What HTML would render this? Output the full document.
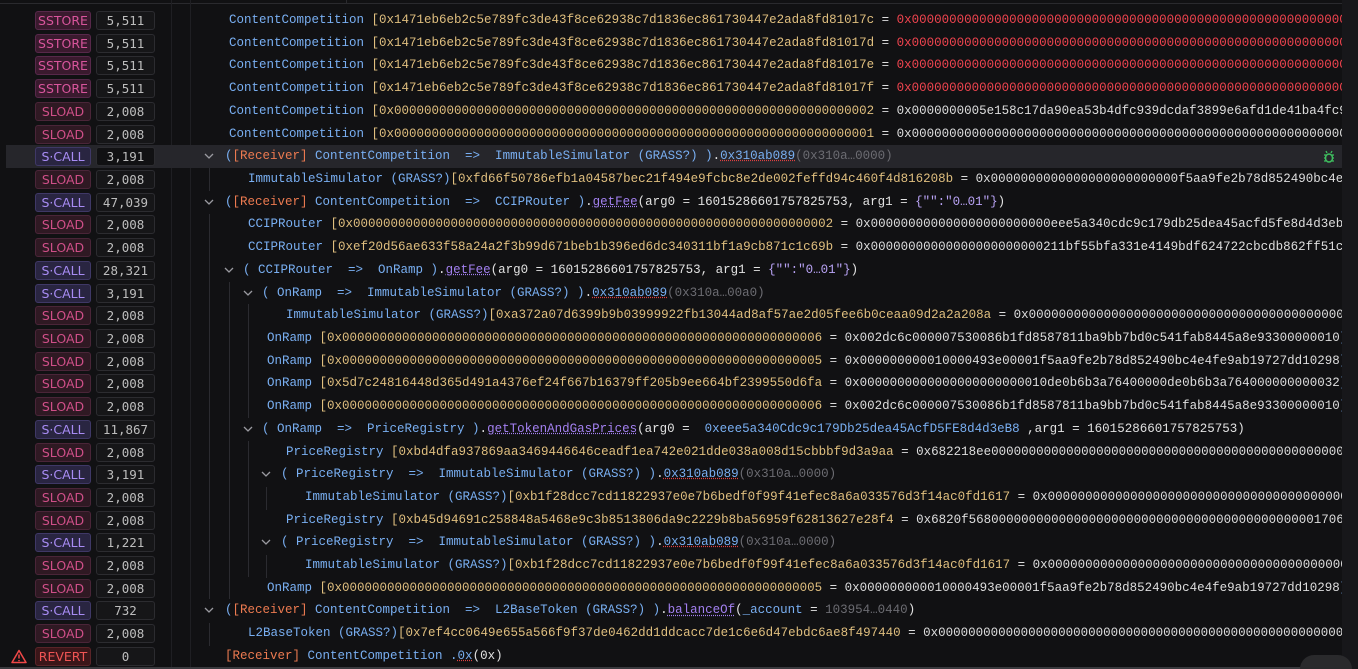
<!DOCTYPE html>
<html style="width:1358px;height:669px;overflow:hidden"><head><meta charset="utf-8"><style>
*{margin:0;padding:0;box-sizing:border-box}
body{width:1358px;height:669px;background:#111113;overflow:hidden;position:relative;font-family:"Liberation Mono",monospace;font-size:12.5px;color:#dedede}
.r{position:absolute;left:0;height:23px;width:1342px}
.hl{background:#26262b;left:6px;width:1336px}
.b{position:absolute;left:35px;top:2px;width:56px;height:19px;border-radius:3px;font-family:"DejaVu Sans","Liberation Sans",sans-serif;font-size:12.5px;line-height:18px;text-align:center}
.ss{background:#3a1a2e;border:1px solid #57284a;color:#d8559c}
.sl{background:#2f1923;border:1px solid #4a2538;color:#cf4f88}
.sc{background:#292541;border:1px solid #3f3866;color:#a88cf4}
.rv{background:#3b1619;border:1px solid #5a2428;color:#f05454}
.g{position:absolute;left:96px;top:2px;width:59px;height:19px;border-radius:3px;background:#161618;border:1px solid #2c2c30;color:#bdbdbd;text-align:center;line-height:18px;font-family:"DejaVu Sans Mono","Liberation Mono",monospace;font-size:12.5px}
.hl .g{background:#111113}
.t{position:absolute;top:0;line-height:23px;white-space:pre;overflow:hidden}
.n{color:#79aff2}.h{color:#e0bf7f}.w{color:#e2e2e2}.red{color:#f0444f}.o{color:#ec7a50}
.f{color:#a380f0;text-decoration:underline dotted #a380f0}
.fx{color:#79aff2;text-decoration:underline dotted #e04040}
.gy{color:#6c6c72}.p{color:#b9a3f5}
.ch{position:absolute;top:7px;width:10px;height:8px}
.v{position:absolute;width:1px;background:#2b2b30}
</style></head><body>
<div style="position:absolute;left:0;top:3px;width:1342px;height:1px;background:#2a2a2e"></div>
<div style="position:absolute;left:346px;top:0;width:1px;height:4px;background:#2a2a2e"></div>
<div style="position:absolute;left:171px;top:0;width:1px;height:669px;background:#1f1f23"></div>
<div style="position:absolute;left:190px;top:0;width:1px;height:669px;background:#1f1f23"></div>
<div style="position:absolute;left:1342px;top:0;width:16px;height:669px;background:#17171a"></div>
<div style="position:absolute;left:0;top:667px;width:1342px;height:2px;background:#3a3a3e"></div>

<div class="v" style="left:209px;top:168px;height:23px"></div>
<div class="v" style="left:209px;top:214px;height:385px"></div>
<div class="v" style="left:229px;top:282px;height:317px"></div>
<div class="v" style="left:248px;top:304px;height:114px"></div>
<div class="v" style="left:248px;top:441px;height:136px"></div>
<div class="v" style="left:266px;top:487px;height:23px"></div>
<div class="v" style="left:266px;top:555px;height:23px"></div>
<div class="v" style="left:209px;top:623px;height:23px"></div>

<div class="r" style="top:9px"><div class="b ss">SSTORE</div><div class="g">5,511</div><div class="t" style="left:229px;width:1113px"><span class="n">ContentCompetition </span><span class="h">[0x1471eb6eb2c5e789fc3de43f8ce62938c7d1836ec861730447e2ada8fd81017c</span> = <span class="red">0x0000000000000000000000000000000000000000000000000000000000000000</span></div></div>
<div class="r" style="top:31.7px"><div class="b ss">SSTORE</div><div class="g">5,511</div><div class="t" style="left:229px;width:1113px"><span class="n">ContentCompetition </span><span class="h">[0x1471eb6eb2c5e789fc3de43f8ce62938c7d1836ec861730447e2ada8fd81017d</span> = <span class="red">0x0000000000000000000000000000000000000000000000000000000000000000</span></div></div>
<div class="r" style="top:54.4px"><div class="b ss">SSTORE</div><div class="g">5,511</div><div class="t" style="left:229px;width:1113px"><span class="n">ContentCompetition </span><span class="h">[0x1471eb6eb2c5e789fc3de43f8ce62938c7d1836ec861730447e2ada8fd81017e</span> = <span class="red">0x0000000000000000000000000000000000000000000000000000000000000000</span></div></div>
<div class="r" style="top:77.1px"><div class="b ss">SSTORE</div><div class="g">5,511</div><div class="t" style="left:229px;width:1113px"><span class="n">ContentCompetition </span><span class="h">[0x1471eb6eb2c5e789fc3de43f8ce62938c7d1836ec861730447e2ada8fd81017f</span> = <span class="red">0x0000000000000000000000000000000000000000000000000000000000000000</span></div></div>
<div class="r" style="top:99.8px"><div class="b sl">SLOAD</div><div class="g">2,008</div><div class="t" style="left:229px;width:1113px"><span class="n">ContentCompetition </span><span class="h">[0x0000000000000000000000000000000000000000000000000000000000000002</span> = 0x0000000005e158c17da90ea53b4dfc939dcdaf3899e6afd1de41ba4fc9</div></div>
<div class="r" style="top:122.6px"><div class="b sl">SLOAD</div><div class="g">2,008</div><div class="t" style="left:229px;width:1113px"><span class="n">ContentCompetition </span><span class="h">[0x0000000000000000000000000000000000000000000000000000000000000001</span> = 0x0000000000000000000000000000000000000000000000000000000000000000</div></div>

<div class="r hl" style="top:145.3px"><div class="b sc" style="left:29px">S·CALL</div><div class="g" style="left:90px">3,191</div>
<svg class="ch" style="left:198px" viewBox="0 0 10 8"><polyline points="1,2 5,6 9,2" fill="none" stroke="#9a9aa0" stroke-width="1.3"/></svg>
<div class="t" style="left:219px;width:1090px"><span class="n">(</span><span class="o">[Receiver]</span><span class="n"> ContentCompetition  =&gt;  ImmutableSimulator (GRASS?) )</span><span class="w">.</span><span class="fx">0x310ab089</span><span class="gy">(0x310a…0000)</span></div>
<svg style="position:absolute;left:1316px;top:5px" width="14" height="14" viewBox="0 0 14 14"><ellipse cx="7" cy="8" rx="3.5" ry="4" fill="none" stroke="#3fbf5f" stroke-width="1.5"/><path d="M2 5h2M10 5h2M2 8h2M10 8h2M2 11h2M10 11h2M5 3l-1-2M9 3l1-2" stroke="#3fbf5f" stroke-width="1.3"/></svg></div>

<div class="r" style="top:168px"><div class="b sl">SLOAD</div><div class="g">2,008</div><div class="t" style="left:248px;width:1094px"><span class="n">ImmutableSimulator (GRASS?)</span><span class="h">[0xfd66f50786efb1a04587bec21f494e9fcbc8e2de002feffd94c460f4d816208b</span> = 0x0000000000000000000000000f5aa9fe2b78d852490bc4e4fe9ab19727dd10298</div></div>

<div class="r" style="top:190.7px"><div class="b sc">S·CALL</div><div class="g">47,039</div>
<svg class="ch" style="left:204px" viewBox="0 0 10 8"><polyline points="1,2 5,6 9,2" fill="none" stroke="#9a9aa0" stroke-width="1.3"/></svg>
<div class="t" style="left:225px;width:1117px"><span class="n">(</span><span class="o">[Receiver]</span><span class="n"> ContentCompetition  =&gt;  CCIPRouter )</span><span class="w">.</span><span class="f">getFee</span><span class="w">(arg0 = 16015286601757825753, arg1 = </span><span class="p">{"":"0…01"}</span><span class="w">)</span></div></div>

<div class="r" style="top:213.4px"><div class="b sl">SLOAD</div><div class="g">2,008</div><div class="t" style="left:248px;width:1094px"><span class="n">CCIPRouter </span><span class="h">[0x0000000000000000000000000000000000000000000000000000000000000002</span> = 0x000000000000000000000000eee5a340cdc9c179db25dea45acfd5fe8d4d3eb8</div></div>
<div class="r" style="top:236.1px"><div class="b sl">SLOAD</div><div class="g">2,008</div><div class="t" style="left:248px;width:1094px"><span class="n">CCIPRouter </span><span class="h">[0xef20d56ae633f58a24a2f3b99d671beb1b396ed6dc340311bf1a9cb871c1c69b</span> = 0x00000000000000000000000211bf55bfa331e4149bdf624722cbcdb862ff51c</div></div>

<div class="r" style="top:258.8px"><div class="b sc">S·CALL</div><div class="g">28,321</div>
<svg class="ch" style="left:224px" viewBox="0 0 10 8"><polyline points="1,2 5,6 9,2" fill="none" stroke="#9a9aa0" stroke-width="1.3"/></svg>
<div class="t" style="left:243px;width:1099px"><span class="n">( CCIPRouter  =&gt;  OnRamp )</span><span class="w">.</span><span class="f">getFee</span><span class="w">(arg0 = 16015286601757825753, arg1 = </span><span class="p">{"":"0…01"}</span><span class="w">)</span></div></div>

<div class="r" style="top:281.5px"><div class="b sc">S·CALL</div><div class="g">3,191</div>
<svg class="ch" style="left:243px" viewBox="0 0 10 8"><polyline points="1,2 5,6 9,2" fill="none" stroke="#9a9aa0" stroke-width="1.3"/></svg>
<div class="t" style="left:262px;width:1080px"><span class="n">( OnRamp  =&gt;  ImmutableSimulator (GRASS?) )</span><span class="w">.</span><span class="fx">0x310ab089</span><span class="gy">(0x310a…00a0)</span></div></div>

<div class="r" style="top:304.2px"><div class="b sl">SLOAD</div><div class="g">2,008</div><div class="t" style="left:286px;width:1056px"><span class="n">ImmutableSimulator (GRASS?)</span><span class="h">[0xa372a07d6399b9b03999922fb13044ad8af57ae2d05fee6b0ceaa09d2a2a208a</span> = 0x0000000000000000000000000000000000000000000000000000000000000000</div></div>
<div class="r" style="top:326.9px"><div class="b sl">SLOAD</div><div class="g">2,008</div><div class="t" style="left:267px;width:1075px"><span class="n">OnRamp </span><span class="h">[0x0000000000000000000000000000000000000000000000000000000000000006</span> = 0x002dc6c000007530086b1fd8587811ba9bb7bd0c541fab8445a8e93300000010<span class="n">]</span></div></div>
<div class="r" style="top:349.6px"><div class="b sl">SLOAD</div><div class="g">2,008</div><div class="t" style="left:267px;width:1075px"><span class="n">OnRamp </span><span class="h">[0x0000000000000000000000000000000000000000000000000000000000000005</span> = 0x000000000010000493e00001f5aa9fe2b78d852490bc4e4fe9ab19727dd10298<span class="n">]</span></div></div>
<div class="r" style="top:372.4px"><div class="b sl">SLOAD</div><div class="g">2,008</div><div class="t" style="left:267px;width:1075px"><span class="n">OnRamp </span><span class="h">[0x5d7c24816448d365d491a4376ef24f667b16379ff205b9ee664bf2399550d6fa</span> = 0x0000000000000000000000010de0b6b3a76400000de0b6b3a764000000000032<span class="n">]</span></div></div>
<div class="r" style="top:395.1px"><div class="b sl">SLOAD</div><div class="g">2,008</div><div class="t" style="left:267px;width:1075px"><span class="n">OnRamp </span><span class="h">[0x0000000000000000000000000000000000000000000000000000000000000006</span> = 0x002dc6c000007530086b1fd8587811ba9bb7bd0c541fab8445a8e93300000010<span class="n">]</span></div></div>

<div class="r" style="top:417.8px"><div class="b sc">S·CALL</div><div class="g">11,867</div>
<svg class="ch" style="left:243px" viewBox="0 0 10 8"><polyline points="1,2 5,6 9,2" fill="none" stroke="#9a9aa0" stroke-width="1.3"/></svg>
<div class="t" style="left:262px;width:1080px"><span class="n">( OnRamp  =&gt;  PriceRegistry )</span><span class="w">.</span><span class="f">getTokenAndGasPrices</span><span class="w">(arg0 =  </span><span class="n">0xeee5a340Cdc9c179Db25dea45AcfD5FE8d4d3eB8</span><span class="w"> ,arg1 = 16015286601757825753)</span></div></div>

<div class="r" style="top:440.5px"><div class="b sl">SLOAD</div><div class="g">2,008</div><div class="t" style="left:286px;width:1056px"><span class="n">PriceRegistry </span><span class="h">[0xbd4dfa937869aa3469446646ceadf1ea742e021dde038a008d15cbbbf9d3a9aa</span> = 0x682218ee0000000000000000000000000000000000000000000000000000000000</div></div>

<div class="r" style="top:463.2px"><div class="b sc">S·CALL</div><div class="g">3,191</div>
<svg class="ch" style="left:261px" viewBox="0 0 10 8"><polyline points="1,2 5,6 9,2" fill="none" stroke="#9a9aa0" stroke-width="1.3"/></svg>
<div class="t" style="left:281px;width:1061px"><span class="n">( PriceRegistry  =&gt;  ImmutableSimulator (GRASS?) )</span><span class="w">.</span><span class="fx">0x310ab089</span><span class="gy">(0x310a…0000)</span></div></div>

<div class="r" style="top:485.9px"><div class="b sl">SLOAD</div><div class="g">2,008</div><div class="t" style="left:305px;width:1037px"><span class="n">ImmutableSimulator (GRASS?)</span><span class="h">[0xb1f28dcc7cd11822937e0e7b6bedf0f99f41efec8a6a033576d3f14ac0fd1617</span> = 0x0000000000000000000000000000000000000000000000000000000000000000</div></div>
<div class="r" style="top:508.6px"><div class="b sl">SLOAD</div><div class="g">2,008</div><div class="t" style="left:286px;width:1056px"><span class="n">PriceRegistry </span><span class="h">[0xb45d94691c258848a5468e9c3b8513806da9c2229b8ba56959f62813627e28f4</span> = 0x6820f5680000000000000000000000000000000000000000000170614c2000</div></div>

<div class="r" style="top:531.3px"><div class="b sc">S·CALL</div><div class="g">1,221</div>
<svg class="ch" style="left:261px" viewBox="0 0 10 8"><polyline points="1,2 5,6 9,2" fill="none" stroke="#9a9aa0" stroke-width="1.3"/></svg>
<div class="t" style="left:281px;width:1061px"><span class="n">( PriceRegistry  =&gt;  ImmutableSimulator (GRASS?) )</span><span class="w">.</span><span class="fx">0x310ab089</span><span class="gy">(0x310a…0000)</span></div></div>

<div class="r" style="top:554px"><div class="b sl">SLOAD</div><div class="g">2,008</div><div class="t" style="left:305px;width:1037px"><span class="n">ImmutableSimulator (GRASS?)</span><span class="h">[0xb1f28dcc7cd11822937e0e7b6bedf0f99f41efec8a6a033576d3f14ac0fd1617</span> = 0x0000000000000000000000000000000000000000000000000000000000000000</div></div>
<div class="r" style="top:576.7px"><div class="b sl">SLOAD</div><div class="g">2,008</div><div class="t" style="left:267px;width:1075px"><span class="n">OnRamp </span><span class="h">[0x0000000000000000000000000000000000000000000000000000000000000005</span> = 0x000000000010000493e00001f5aa9fe2b78d852490bc4e4fe9ab19727dd10298<span class="n">]</span></div></div>

<div class="r" style="top:599.4px"><div class="b sc">S·CALL</div><div class="g">732</div>
<svg class="ch" style="left:204px" viewBox="0 0 10 8"><polyline points="1,2 5,6 9,2" fill="none" stroke="#9a9aa0" stroke-width="1.3"/></svg>
<div class="t" style="left:225px;width:1117px"><span class="n">(</span><span class="o">[Receiver]</span><span class="n"> ContentCompetition  =&gt;  L2BaseToken (GRASS?) )</span><span class="w">.</span><span class="f">balanceOf</span><span class="w">(</span><span class="n">_account</span><span class="w"> = </span><span class="gy">103954…0440</span><span class="w">)</span></div></div>

<div class="r" style="top:622.1px"><div class="b sl">SLOAD</div><div class="g">2,008</div><div class="t" style="left:248px;width:1094px"><span class="n">L2BaseToken (GRASS?)</span><span class="h">[0x7ef4cc0649e655a566f9f37de0462dd1ddcacc7de1c6e6d47ebdc6ae8f497440</span> = 0x0000000000000000000000000000000000000000000000000000000000000000</div></div>

<div class="r" style="top:644.8px">
<svg style="position:absolute;left:11px;top:4px" width="16" height="15" viewBox="0 0 16 15"><path d="M8 1.5L15 13.5H1Z" fill="none" stroke="#f04848" stroke-width="1.5" stroke-linejoin="round"/><path d="M8 5.5v4M8 11v1.2" stroke="#f04848" stroke-width="1.5"/></svg>
<div class="b rv">REVERT</div><div class="g">0</div><div class="t" style="left:225px;width:1117px"><span class="o">[Receiver]</span><span class="n"> ContentCompetition .</span><span class="fx">0x</span><span class="w">(0x)</span></div></div>

<div style="position:absolute;left:1300px;top:655px;width:52px;height:14px;border-radius:26px 26px 0 0;background:#2a2a2c"></div>
</body></html>
